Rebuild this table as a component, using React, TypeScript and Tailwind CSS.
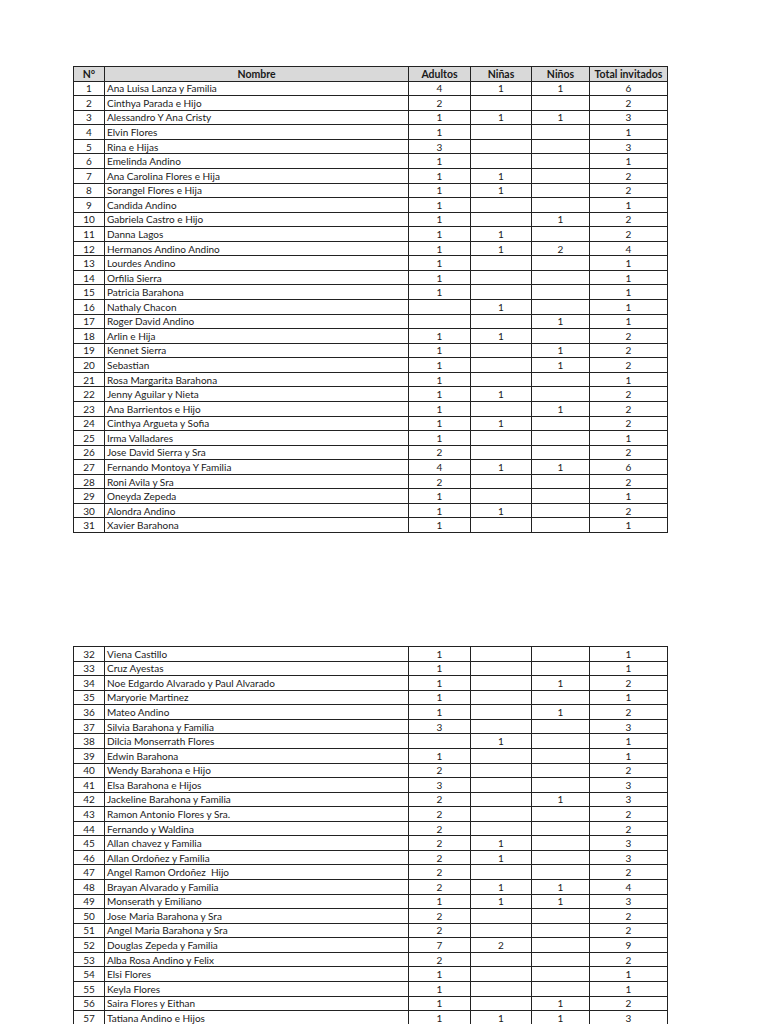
type Guest = [number, string, string, string, string, string]

const FIRST: Guest[] = [
  [1, 'Ana Luisa Lanza y Familia', '4', '1', '1', '6'],
  [2, 'Cinthya Parada e Hijo', '2', '', '', '2'],
  [3, 'Alessandro Y Ana Cristy', '1', '1', '1', '3'],
  [4, 'Elvin Flores', '1', '', '', '1'],
  [5, 'Rina e Hijas', '3', '', '', '3'],
  [6, 'Emelinda Andino', '1', '', '', '1'],
  [7, 'Ana Carolina Flores e Hija', '1', '1', '', '2'],
  [8, 'Sorangel Flores e Hija', '1', '1', '', '2'],
  [9, 'Candida Andino', '1', '', '', '1'],
  [10, 'Gabriela Castro e Hijo', '1', '', '1', '2'],
  [11, 'Danna Lagos', '1', '1', '', '2'],
  [12, 'Hermanos Andino Andino', '1', '1', '2', '4'],
  [13, 'Lourdes Andino', '1', '', '', '1'],
  [14, 'Orfilia Sierra', '1', '', '', '1'],
  [15, 'Patricia Barahona', '1', '', '', '1'],
  [16, 'Nathaly Chacon', '', '1', '', '1'],
  [17, 'Roger David Andino', '', '', '1', '1'],
  [18, 'Arlin e Hija', '1', '1', '', '2'],
  [19, 'Kennet Sierra', '1', '', '1', '2'],
  [20, 'Sebastian', '1', '', '1', '2'],
  [21, 'Rosa Margarita Barahona', '1', '', '', '1'],
  [22, 'Jenny Aguilar y Nieta', '1', '1', '', '2'],
  [23, 'Ana Barrientos e Hijo', '1', '', '1', '2'],
  [24, 'Cinthya Argueta y Sofia', '1', '1', '', '2'],
  [25, 'Irma Valladares', '1', '', '', '1'],
  [26, 'Jose David Sierra y Sra', '2', '', '', '2'],
  [27, 'Fernando Montoya Y Familia', '4', '1', '1', '6'],
  [28, 'Roni Avila y Sra', '2', '', '', '2'],
  [29, 'Oneyda Zepeda', '1', '', '', '1'],
  [30, 'Alondra Andino', '1', '1', '', '2'],
  [31, 'Xavier Barahona', '1', '', '', '1'],
]

const SECOND: Guest[] = [
  [32, 'Viena Castillo', '1', '', '', '1'],
  [33, 'Cruz Ayestas', '1', '', '', '1'],
  [34, 'Noe Edgardo Alvarado y Paul Alvarado', '1', '', '1', '2'],
  [35, 'Maryorie Martinez', '1', '', '', '1'],
  [36, 'Mateo Andino', '1', '', '1', '2'],
  [37, 'Silvia Barahona y Familia', '3', '', '', '3'],
  [38, 'Dilcia Monserrath Flores', '', '1', '', '1'],
  [39, 'Edwin Barahona', '1', '', '', '1'],
  [40, 'Wendy Barahona e Hijo', '2', '', '', '2'],
  [41, 'Elsa Barahona e Hijos', '3', '', '', '3'],
  [42, 'Jackeline Barahona y Familia', '2', '', '1', '3'],
  [43, 'Ramon Antonio Flores y Sra.', '2', '', '', '2'],
  [44, 'Fernando y Waldina', '2', '', '', '2'],
  [45, 'Allan chavez y Familia', '2', '1', '', '3'],
  [46, 'Allan Ordoñez y Familia', '2', '1', '', '3'],
  [47, 'Angel Ramon Ordoñez  Hijo', '2', '', '', '2'],
  [48, 'Brayan Alvarado y Familia', '2', '1', '1', '4'],
  [49, 'Monserath y Emiliano', '1', '1', '1', '3'],
  [50, 'Jose Maria Barahona y Sra', '2', '', '', '2'],
  [51, 'Angel Maria Barahona y Sra', '2', '', '', '2'],
  [52, 'Douglas Zepeda y Familia', '7', '2', '', '9'],
  [53, 'Alba Rosa Andino y Felix', '2', '', '', '2'],
  [54, 'Elsi Flores', '1', '', '', '1'],
  [55, 'Keyla Flores', '1', '', '', '1'],
  [56, 'Saira Flores y Eithan', '1', '', '1', '2'],
  [57, 'Tatiana Andino e Hijos', '1', '1', '1', '3'],
]

const COLS = 'grid grid-cols-[31px_304px_62px_61px_58px_78px]'
const CELL = 'border-r border-b border-[#222] flex items-center overflow-hidden whitespace-pre leading-none'

function Row({ g }: { g: Guest }) {
  return (
    <div className={`${COLS} h-[14.57px]`}>
      <div className={`${CELL} justify-center`}>{g[0]}</div>
      <div className={`${CELL} pl-[2px]`}>{g[1]}</div>
      <div className={`${CELL} justify-center`}>{g[2]}</div>
      <div className={`${CELL} justify-center`}>{g[3]}</div>
      <div className={`${CELL} justify-center`}>{g[4]}</div>
      <div className={`${CELL} justify-center`}>{g[5]}</div>
    </div>
  )
}

function Sheet({ rows, header }: { rows: Guest[]; header?: boolean }) {
  return (
    <div className="w-[595px] border-l border-t border-[#222]">
      {header && (
        <div className={`${COLS} h-[14.57px] bg-[#d9d9d9] font-bold text-[10.5px]`}>
          {['N°', 'Nombre', 'Adultos', 'Niñas', 'Niños', 'Total invitados'].map((h) => (
            <div key={h} className={`${CELL} justify-center`}>{h}</div>
          ))}
        </div>
      )}
      {rows.map((g) => (
        <Row key={g[0]} g={g} />
      ))}
    </div>
  )
}

export default function App() {
  return (
    <div className="h-[1024px] overflow-hidden bg-white pl-[73px] pt-[66px] font-['Lato','Carlito',sans-serif] text-[10px] text-[#1a1a1a]">
      <Sheet rows={FIRST} header />
      <div className="h-[113px]" />
      <Sheet rows={SECOND} />
    </div>
  )
}
